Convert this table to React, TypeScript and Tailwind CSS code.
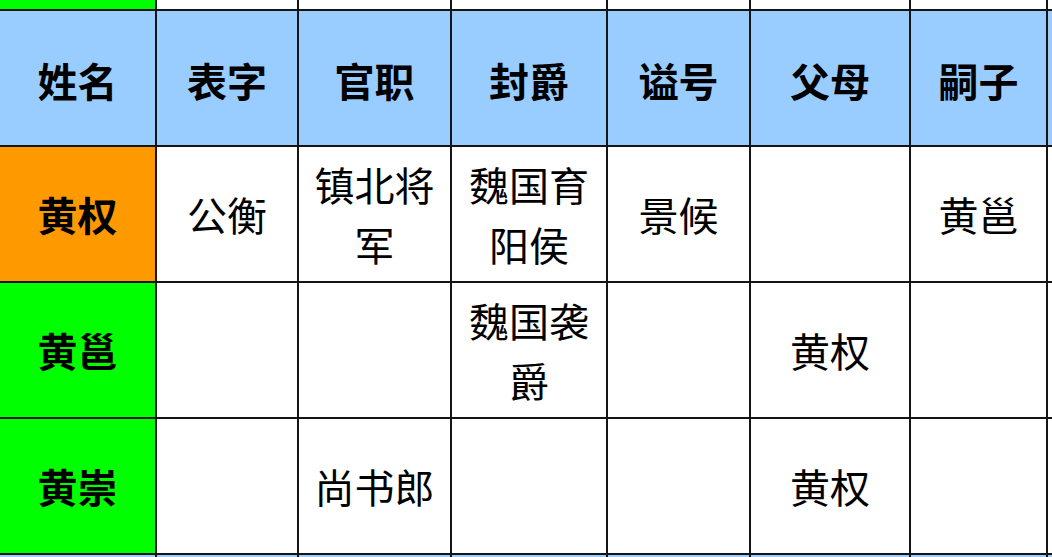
import React from "react";

const font = { fontFamily: '"Noto Sans CJK SC", "Noto Sans", sans-serif' };

const headers = ["姓名", "表字", "官职", "封爵", "谥号", "父母", "嗣子", ""];

const rows: { name: string; nameBg: string; cells: string[][] }[] = [
  {
    name: "黄权",
    nameBg: "bg-[#ff9900]",
    cells: [["公衡"], ["镇北将", "军"], ["魏国育", "阳侯"], ["景候"], [], ["黄邕"]],
  },
  {
    name: "黄邕",
    nameBg: "bg-[#00ff00]",
    cells: [[], [], ["魏国袭", "爵"], [], ["黄权"], []],
  },
  {
    name: "黄崇",
    nameBg: "bg-[#00ff00]",
    cells: [[], ["尚书郎"], [], [], ["黄权"], []],
  },
];

function Text({ lines, bold }: { lines: string[]; bold?: boolean }) {
  return (
    <div
      className={`flex flex-col items-center justify-center text-center text-[40px] leading-[60px] text-black whitespace-nowrap ${
        bold ? "font-bold" : "font-normal"
      }`}
    >
      {lines.map((l, i) => (
        <span key={i}>{l}</span>
      ))}
    </div>
  );
}

export default function App() {
  return (
    <div className="w-[1052px] h-[557px] overflow-hidden bg-white" style={font}>
      <div className="grid gap-[2px] bg-[#151515] grid-cols-[155px_140px_151px_154px_141px_158px_135px_1fr] grid-rows-[9px_134px_134px_134px_134px_100px] w-[1052px]">
        <div className="bg-[#00ff00]" />
        {Array.from({ length: 7 }).map((_, i) => (
          <div key={`t${i}`} className="bg-white" />
        ))}
        {headers.map((h, i) => (
          <div key={`h${i}`} className="bg-[#99ccff] flex items-center justify-center pt-[4px]">
            {h && <Text lines={[h]} bold />}
          </div>
        ))}
        {rows.map((r, ri) => (
          <React.Fragment key={ri}>
            <div className={`${r.nameBg} flex items-center justify-center`}>
              <Text lines={[r.name]} bold />
            </div>
            {r.cells.map((c, ci) => (
              <div key={ci} className="bg-white flex items-center justify-center">
                {c.length > 0 && <Text lines={c} />}
              </div>
            ))}
            <div className="bg-white" />
          </React.Fragment>
        ))}
        {Array.from({ length: 8 }).map((_, i) => (
          <div key={`b${i}`} className="bg-[#99ccff]" />
        ))}
      </div>
    </div>
  );
}
